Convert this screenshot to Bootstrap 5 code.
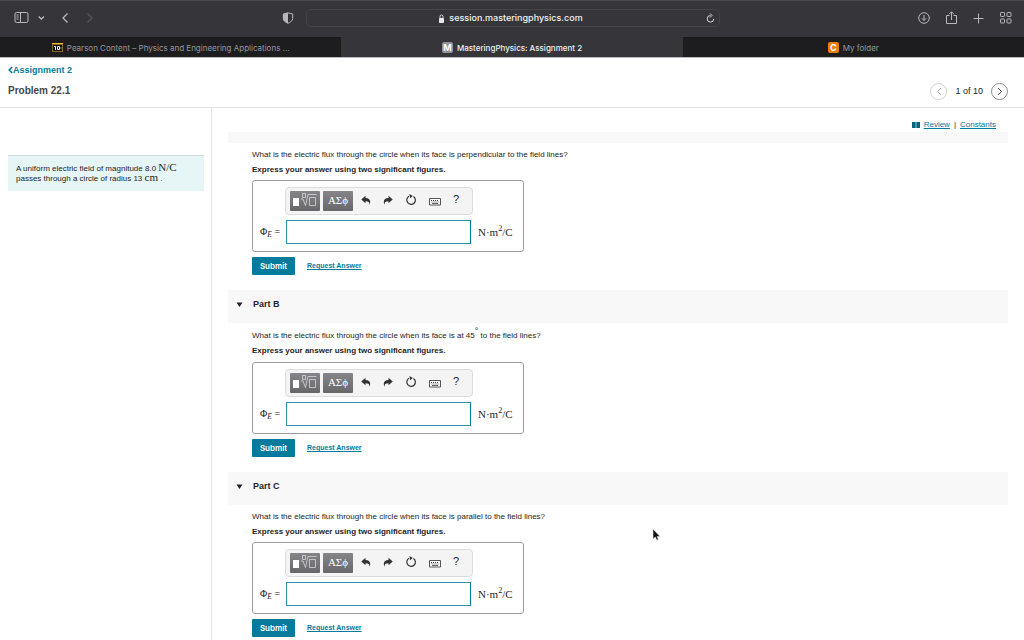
<!DOCTYPE html>
<html lang="en">
<head>
<meta charset="utf-8">
<meta name="viewport" content="width=device-width, initial-scale=1">
<title>MasteringPhysics: Assignment 2</title>
<link href="https://cdn.jsdelivr.net/npm/bootstrap@5.3.0/dist/css/bootstrap.min.css" rel="stylesheet">
<style>
:root { --teal: #047a9c; --ink: #252525; }
body { font-family: "Liberation Sans", Arial, sans-serif; font-size: 8px; line-height: 12px; color: var(--ink); background: #fff; }
a { color: var(--teal); }
button { padding: 0; border: 0; background: none; color: inherit; line-height: 1; }
svg { display: block; }
.math { font-family: "Liberation Serif", "DejaVu Serif", serif; font-size: 11px; line-height: 1; }

/* browser chrome */
.chrome { background: #36353a; color: #b9b9bd; border-top: 1px solid #4b4a4f; font-family: Inter, sans-serif; }
.toolbar { height: 36px; padding: 0 12px 2px 14px; display: grid; grid-template-columns: 1fr 414px 1fr; }
.address { height: 18px; border: 1px solid #45444a; border-radius: 5px; color: #f2f2f3; font-size: 9px; font-weight: 500; }
.tabs { height: 21px; border-bottom: 1px solid #b8b8ba; }
.tab { flex: 1 1 0; font-size: 8px; color: #98989b; background: #1d1d1f; text-decoration: none; border-top: 1px solid #18181a; }
.tab.current { color: #f0f0f1; background: #36353a; border-color: #36353a; font-weight: 500; }
.favicon { width: 11px; height: 11px; border-radius: 2px; font-weight: 700; font-size: 9px; line-height: 11px; text-align: center; color: #fff; }
.favicon.gray { background: #92929f; }
.favicon.orange { background: #ee7d0b; }

/* page header */
.page-head { height: 50px; padding: 0 16px 0 8px; border-bottom: 1px solid #dedfe0; }
.back { font-size: 9px; font-weight: 700; margin-top: 6px; }
.problem-title { font-size: 10px; line-height: 14px; font-weight: 700; color: #474747; margin: 8px 0 0; }
.pager { font-size: 9px; padding-top: 17px; }
.round { width: 17px; height: 17px; border: 1px solid #8b8b8b; border-radius: 50%; color: #333; }
.round:disabled { border-color: #d2d2d2; color: #999; }

/* columns */
.side { width: 212px; border-right: 1px solid #e4e5e6; padding: 47px 7px 0 8px; }
.prompt { background: #e6f6f6; border-top: 1px solid #d3dcdc; padding: 8px 8px 7px; line-height: 10px; }
.prompt .math { line-height: 0; }
.work { padding: 11px 16px 0; }
.tool-links { padding: 0 12px 1px 0; gap: 4px; }
.band { background: #f8f8f8; height: 33px; padding: 9px 8px 0; font-size: 9px; font-weight: 700; }
.band.cut { height: 11px; }
.caret { width: 9px; margin: 3px 8px 0 0; }
.body-part { padding: 6px 24px 15px; }
section:last-child .body-part { padding-bottom: 0; }
.question.raised { line-height: 14px; }
.question sup { font-size: 9px; line-height: 0; }
.instruction { font-weight: 700; margin-top: 3px; }
.raised + .instruction { margin-top: 2px; }
.raised ~ .answer { margin-top: 5px; }
.answer { width: 272px; height: 72px; margin-top: 4px; border: 1px solid #9c9c9c; border-radius: 3px; padding: 6px 0 0 7px; }
.tools { width: 188px; height: 28px; margin-left: 25px; padding: 3px 4px; gap: 3px; border: 1px solid #dcdcdc; border-radius: 4px; background: #f4f4f4; }
.key { width: 30px; height: 20px; flex-shrink: 0; border-bottom: 2px solid #68686b; border-radius: 1px; background: linear-gradient(#85858a, #6b6b6e); color: #fff; }
.history { gap: 12px; padding: 0 0 3px 5px; }
.low { margin-top: 4px; }
.help { font-size: 11px; }
.entry { width: 185px; height: 24px; border: 1px solid #2b8fab; border-right-color: var(--teal); padding: 0 4px; font-size: 10px; }
.entry-row { margin-top: 5px; }
.phi { width: 26px; font-size: 10px; }
.unit { margin-left: 7px; }
.actions { margin-top: 5px; gap: 12px; }
.actions a { font-size: 7px; font-weight: 700; }
.submit { width: 43px; height: 18px; background: var(--teal); color: #fff; font-family: Inter, sans-serif; font-size: 8px; font-weight: 600; border-radius: 1px; }
.pointer { left: 652px; top: 528px; pointer-events: none; }
</style>
</head>
<body class="d-flex flex-column min-vh-100 position-relative">
<svg class="d-none" aria-hidden="true">
  <symbol id="templates" viewBox="0 0 30 18"><path d="M3 7h6v8H3z" fill="#fff"/><path d="M12.500 2.500v4h3v-4zM11 8h2l2.500 6.500L18 3.500h8.500M19.500 6.500h6v8h-6z" fill="none" stroke="#d8d8da" stroke-width=".8"/></symbol>
  <symbol id="undo" viewBox="0 0 10 10"><path d="M.3 4.500 4.500.8v2.200C8.500 3 10.300 5.500 8.500 9.700 8.500 7.200 7.500 6.300 4.500 6.300v2z" fill="#333"/></symbol>
  <symbol id="redo" viewBox="0 0 10 10"><path d="M9.700 4.500 5.500.8v2.200C1.500 3-.3 5.500 1.500 9.700 1.500 7.200 2.500 6.300 5.500 6.300v2z" fill="#333"/></symbol>
  <symbol id="reset" viewBox="0 0 12 12"><path d="M4 2.300a4.300 4.300 0 1 0 4.500.2" fill="none" stroke="#333" stroke-width="1.200"/><path d="M4.500 0 7.800 2 5 4.200z" fill="#333"/></symbol>
  <symbol id="keyboard" viewBox="0 0 12 8"><path d="M.5.500h11v6.500H.5z" fill="#fff" stroke="#555"/><path d="M2 2.500h8M2.500 4h8" stroke="#444" stroke-dasharray="1 1"/><path d="M3 5.500h6" stroke="#666"/></symbol>
  <symbol id="left" viewBox="0 0 8 12"><path d="M6.500 1.500 2 6l4.500 4.500" fill="none" stroke="currentColor" stroke-width="1.300"/></symbol>
  <symbol id="right" viewBox="0 0 8 12"><path d="M1.500 1.500 6 6l-4.500 4.500" fill="none" stroke="currentColor" stroke-width="1.300"/></symbol>
</svg>

<header class="chrome">
  <div class="toolbar align-items-center">
    <div class="d-flex align-items-center">
      <button aria-label="Sidebar"><svg width="16" height="12" fill="none" stroke="currentColor"><rect x="1" y=".5" width="13" height="10" rx="1.500"/><path d="M6.500.500v10M2.500 3h2M2.500 5h2M2.500 7h2"/></svg></button>
      <button class="ms-2" aria-label="Tab groups"><svg width="7" height="6" fill="none" stroke="currentColor" stroke-width="1.300"><path d="M.7 1.500 3.300 4 6 1.500"/></svg></button>
      <button class="ms-3" aria-label="Back"><svg width="8" height="12"><use href="#left"/></svg></button>
      <button class="ms-3 opacity-25" aria-label="Forward"><svg width="10" height="12"><use href="#right"/></svg></button>
      <button class="ms-auto me-2 pe-1" aria-label="Privacy"><svg width="12" height="12"><path d="M6 .8 10.700 2v4.500C10.700 9 8 10.500 6 11.300 4 10.500 1.300 9 1.300 6.500V2z" fill="none" stroke="currentColor"/><path d="M6 .8v10.500C4 10.500 1.300 9 1.300 6.500V2z" fill="currentColor"/></svg></button>
    </div>
    <div class="address d-flex align-items-center">
      <span class="mx-auto d-flex align-items-center gap-1 ps-2 ms-auto"><svg width="7" height="9"><rect x="1" y="4" width="5" height="5" rx=".7" fill="#e8e8ea"/><path d="M2 4V2.500a1.500 1.500 0 0 1 3 0V4" fill="none" stroke="#e8e8ea" stroke-width=".9"/></svg>session.masteringphysics.com</span>
      <button class="me-1" aria-label="Reload"><svg width="9" height="11" fill="none" stroke="#d8d8da"><path d="M4.500 2.500a3.300 3.300 0 1 0 3.300 3.300M4 .500l2 2-2 2"/></svg></button>
    </div>
    <div class="d-flex align-items-center justify-content-end gap-3">
      <button aria-label="Downloads"><svg width="12" height="12" fill="none" stroke="currentColor"><circle cx="6" cy="6" r="5.300"/><path d="M6 3v5.500M3.800 6.300 6 8.500l2.200-2.200"/></svg></button>
      <button aria-label="Share"><svg width="11" height="14" fill="none" stroke="currentColor"><path d="M3.500 4.500H.500v8h10v-8h-3M5.500 9V1M3 3.300 5.500.8 8 3.300"/></svg></button>
      <button aria-label="New tab"><svg width="11" height="11" fill="none" stroke="currentColor"><path d="M5.500.500v10M.500 5.500h10"/></svg></button>
      <button aria-label="Tab overview"><svg width="12" height="12" fill="none" stroke="currentColor"><rect x=".5" y=".5" width="4" height="4" rx=".7"/><rect x="7" y=".5" width="4" height="4" rx=".7"/><rect x=".5" y="7" width="4" height="4" rx=".7"/><rect x="7" y="7" width="4" height="4" rx=".7"/></svg></button>
    </div>
  </div>
  <nav class="tabs d-flex" aria-label="Tabs">
    <a class="tab d-flex align-items-center justify-content-center gap-1" href="#"><svg width="11" height="9"><path d="M0 0h11v9H0z" fill="#8a6420"/><path d="M1 2h9v6H1z" fill="#111"/><path d="M0 .5h11" stroke="#f0bb35"/><path d="M2 3.500h2M3.500 3v4M5.500 3.500h2v3h-2zM8.500 5h1" stroke="#eee" fill="none"/></svg>Pearson Content – Physics and Engineering Applications ...</a>
    <a class="tab current d-flex align-items-center justify-content-center gap-1" href="#"><span class="favicon gray">M</span>MasteringPhysics: Assignment 2</a>
    <a class="tab d-flex align-items-center justify-content-center gap-1" href="#"><span class="favicon orange">C</span>My folder</a>
  </nav>
</header>

<div class="page-head d-flex justify-content-between">
  <div>
    <a class="back d-flex align-items-center text-decoration-none" href="#"><svg width="5" height="8" fill="none" stroke="currentColor" stroke-width="1.600"><path d="M4.200 1 1.200 4l3 3"/></svg>Assignment 2</a>
    <h1 class="problem-title">Problem 22.1</h1>
  </div>
  <div class="pager d-flex align-items-center align-self-center gap-2">
    <button class="round d-flex align-items-center justify-content-center" aria-label="Previous" disabled><svg width="6" height="9"><use href="#left"/></svg></button>
    <span>1 of 10</span>
    <button class="round d-flex align-items-center justify-content-center" aria-label="Next"><svg width="6" height="9"><use href="#right"/></svg></button>
  </div>
</div>

<div class="d-flex flex-grow-1">
  <aside class="side flex-shrink-0">
    <div class="prompt">A uniform electric field of magnitude 8.0 <span class="math">N/C</span><br>passes through a circle of radius 13 <span class="math">cm</span> .</div>
  </aside>
  <main class="work flex-grow-1">
    <div class="tool-links d-flex align-items-center justify-content-end">
      <svg width="8" height="7"><path d="M0 0h3.700v6H0zM4.300 0H8v6H4.300z" fill="#056580"/></svg>
      <a href="#">Review</a> <span>|</span> <a href="#">Constants</a>
    </div>

    <section>
      <div class="band cut"></div>
      <div class="body-part">
        <div class="question">What is the electric flux through the circle when its face is perpendicular to the field lines?</div>
        <div class="instruction">Express your answer using two significant figures.</div>
        <div class="answer">
          <div class="tools d-flex">
            <button class="key" aria-label="Templates"><svg width="30" height="18"><use href="#templates"/></svg></button>
            <button class="key math" aria-label="Symbols">ΑΣϕ</button>
            <div class="history d-flex align-items-center">
              <button aria-label="Undo"><svg width="10" height="10"><use href="#undo"/></svg></button>
              <button aria-label="Redo"><svg width="10" height="10"><use href="#redo"/></svg></button>
              <button aria-label="Reset"><svg width="12" height="12"><use href="#reset"/></svg></button>
              <button class="low" aria-label="Keyboard"><svg width="12" height="8"><use href="#keyboard"/></svg></button>
              <button class="help" aria-label="Help">?</button>
            </div>
          </div>
          <div class="entry-row d-flex align-items-center">
            <label class="math phi" for="answer-a">Φ<sub><i>E</i></sub> =</label>
            <input class="entry" id="answer-a" type="text"><span class="math unit">N·m<sup>2</sup>/C</span>
          </div>
        </div>
        <div class="actions d-flex align-items-center"><button class="submit">Submit</button><a href="#">Request Answer</a></div>
      </div>
    </section>

    <section>
      <h2 class="band d-flex align-items-start m-0"><svg class="caret flex-shrink-0" width="9" height="6"><path d="M.5.500h6L3.500 5z" fill="#222"/></svg><span>Part B</span></h2>
      <div class="body-part">
        <div class="question raised">What is the electric flux through the circle when its face is at 45<sup>°</sup> to the field lines?</div>
        <div class="instruction">Express your answer using two significant figures.</div>
        <div class="answer">
          <div class="tools d-flex">
            <button class="key" aria-label="Templates"><svg width="30" height="18"><use href="#templates"/></svg></button>
            <button class="key math" aria-label="Symbols">ΑΣϕ</button>
            <div class="history d-flex align-items-center">
              <button aria-label="Undo"><svg width="10" height="10"><use href="#undo"/></svg></button>
              <button aria-label="Redo"><svg width="10" height="10"><use href="#redo"/></svg></button>
              <button aria-label="Reset"><svg width="12" height="12"><use href="#reset"/></svg></button>
              <button class="low" aria-label="Keyboard"><svg width="12" height="8"><use href="#keyboard"/></svg></button>
              <button class="help" aria-label="Help">?</button>
            </div>
          </div>
          <div class="entry-row d-flex align-items-center">
            <label class="math phi" for="answer-b">Φ<sub><i>E</i></sub> =</label>
            <input class="entry" id="answer-b" type="text"><span class="math unit">N·m<sup>2</sup>/C</span>
          </div>
        </div>
        <div class="actions d-flex align-items-center"><button class="submit">Submit</button><a href="#">Request Answer</a></div>
      </div>
    </section>

    <section>
      <h2 class="band d-flex align-items-start m-0"><svg class="caret flex-shrink-0" width="9" height="6"><path d="M.5.500h6L3.500 5z" fill="#222"/></svg><span>Part C</span></h2>
      <div class="body-part">
        <div class="question">What is the electric flux through the circle when its face is parallel to the field lines?</div>
        <div class="instruction">Express your answer using two significant figures.</div>
        <div class="answer">
          <div class="tools d-flex">
            <button class="key" aria-label="Templates"><svg width="30" height="18"><use href="#templates"/></svg></button>
            <button class="key math" aria-label="Symbols">ΑΣϕ</button>
            <div class="history d-flex align-items-center">
              <button aria-label="Undo"><svg width="10" height="10"><use href="#undo"/></svg></button>
              <button aria-label="Redo"><svg width="10" height="10"><use href="#redo"/></svg></button>
              <button aria-label="Reset"><svg width="12" height="12"><use href="#reset"/></svg></button>
              <button class="low" aria-label="Keyboard"><svg width="12" height="8"><use href="#keyboard"/></svg></button>
              <button class="help" aria-label="Help">?</button>
            </div>
          </div>
          <div class="entry-row d-flex align-items-center">
            <label class="math phi" for="answer-c">Φ<sub><i>E</i></sub> =</label>
            <input class="entry" id="answer-c" type="text"><span class="math unit">N·m<sup>2</sup>/C</span>
          </div>
        </div>
        <div class="actions d-flex align-items-center"><button class="submit">Submit</button><a href="#">Request Answer</a></div>
      </div>
    </section>
  </main>
</div>
<svg class="pointer position-absolute" width="9" height="13"><path d="M1 1v10l2.300-2 1.500 3.200 1.500-.7L5 8.500h3z" fill="#111" stroke="#ddd" stroke-width=".6"/></svg>
</body>
</html>
